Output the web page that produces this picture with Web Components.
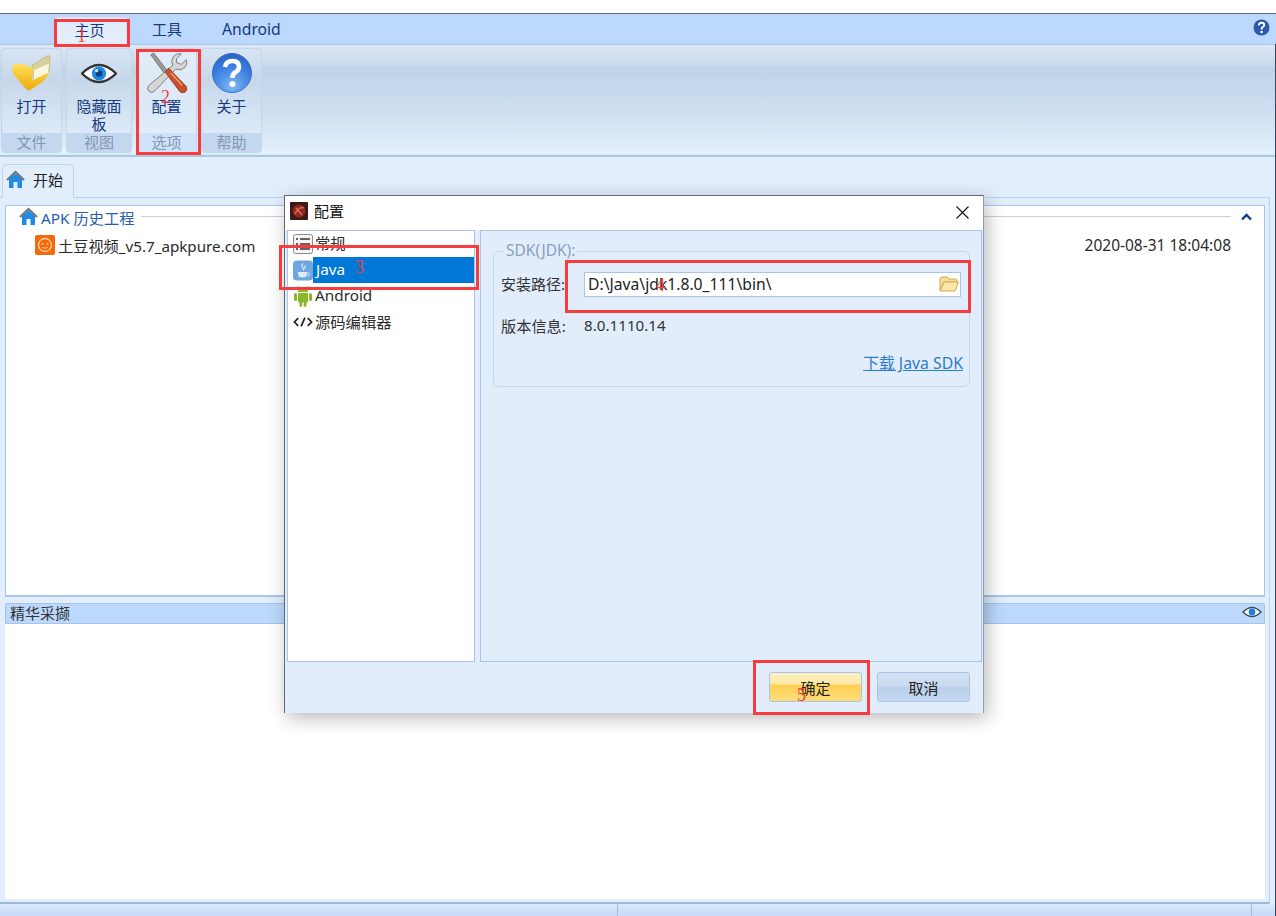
<!DOCTYPE html>
<html lang="zh">
<head>
<meta charset="utf-8">
<title>配置</title>
<style>
  html, body { margin: 0; padding: 0; background: #fff; }
  body { width: 1276px; height: 916px; overflow: hidden; position: relative; font: 15px "Noto Sans", "Noto Sans CJK SC", sans-serif; }
</style>
</head>
<body>
<app-shell>
  <main-ribbon></main-ribbon>
  <doc-area></doc-area>
  <status-bar></status-bar>
</app-shell>
<config-dialog></config-dialog>
<red-mark style="left:54px;top:19px;width:76px;height:28px" digit="1" dx="20" dy="5"></red-mark>
<red-mark style="left:136px;top:49px;width:65px;height:106px" digit="2" dx="22" dy="36"></red-mark>
<red-mark style="left:279px;top:245px;width:200px;height:45px" digit="3" dx="73" dy="10"></red-mark>
<red-mark style="left:565px;top:260px;width:406px;height:53px" digit="4" dx="88" dy="13"></red-mark>
<red-mark style="left:753px;top:660px;width:117px;height:55px" digit="5" dx="41" dy="23"></red-mark>

<script>
const ICONS = {
  folder: `<svg width="42" height="38" viewBox="0 0 44 40"><defs><linearGradient id="f" x1="0" y1="0" x2="0" y2="1"><stop offset="0" stop-color="#ffe25a"/><stop offset="1" stop-color="#eda808"/></linearGradient></defs>
    <path d="M22 12 L38 2 Q41 1 41 4 L40 18 L24 26Z" fill="#d8cf9c" stroke="#c4b878"/>
    <path d="M24 17 L40 10 L39 20 L24 28Z" fill="#fbf6dc"/>
    <path d="M1 14 Q1 11 4 11 L12 10 L16 13 L23 14 L22 28 L41 19 L34 29 L20 38 Q18 39 16 37 L3 22Q1 19 1 14Z" fill="url(#f)"/></svg>`,
  eye: `<svg width="36" height="23" viewBox="0 0 38 24"><path d="M1 12 Q19 -6 37 12 Q19 30 1 12Z" fill="#fff" stroke="#333" stroke-width="2.6"/><circle cx="19" cy="12" r="7.5" fill="#1e88e0"/><circle cx="19" cy="12" r="3.4" fill="#0b3f80"/><circle cx="16.5" cy="9" r="1.8" fill="#bfe4ff"/></svg>`,
  tools: `<svg width="42" height="42" viewBox="0 0 44 44">
    <path d="M5 3 L8 1 L22 19 L19 22Z" fill="#9a9a9a" stroke="#666" stroke-width=".8"/>
    <path d="M37 2 Q31 1 28 6 Q26 10 28 14 L3 35 Q0 39 3 41 Q6 44 9 41 L31 18 Q37 20 41 16 Q44 12 42 8 L37 13 L32 11 L32 7Z" fill="#d6d6d6" stroke="#7c7c7c" stroke-width="1"/>
    <path d="M20 21 L24 17 L42 36 Q44 40 41 42 Q37 44 35 41Z" fill="#c8502a" stroke="#8a3418" stroke-width=".8"/>
    <path d="M26 22 L38 35" stroke="#ee9a74" stroke-width="1.6" fill="none"/></svg>`,
  help: `<svg width="40" height="40" viewBox="0 0 40 40"><defs><radialGradient id="h" cx=".5" cy=".85" r=".9"><stop offset="0" stop-color="#7cb8f6"/><stop offset=".6" stop-color="#3a7ee0"/><stop offset="1" stop-color="#2a5cc0"/></radialGradient></defs><circle cx="20" cy="20" r="19.5" fill="url(#h)" stroke="#3c6cc0"/><path d="M13 14 Q14 8 20.500 8 Q27 8 27 14 Q27 17.500 23 19.500 Q20.500 21 20.500 25" fill="none" stroke="#fff" stroke-width="4.600"/><circle cx="20.500" cy="31" r="3" fill="#fff"/></svg>`,
  helpSmall: `<svg width="17" height="17" viewBox="0 0 17 17"><circle cx="8.500" cy="8.500" r="8" fill="#2b5aa8"/><path d="M5.800 6.500 Q6 3.800 8.600 3.800 Q11.200 3.800 11.200 6 Q11.200 7.500 9.700 8.200 Q8.600 8.800 8.600 10.500" fill="none" stroke="#fff" stroke-width="1.900"/><circle cx="8.600" cy="13" r="1.300" fill="#fff"/></svg>`,
  home: `<svg width="19" height="19" viewBox="0 0 19 19"><path d="M3 9 L3 18 L7.500 18 L7.500 12 L11.500 12 L11.500 18 L16 18 L16 9 L9.500 3.500Z" fill="#1f8be6"/><path d="M1 10 L9.500 2 L18 10" fill="none" stroke="#6d7a86" stroke-width="2.300"/></svg>`,
  app: `<svg width="20" height="20" viewBox="0 0 20 20"><rect width="20" height="20" rx="2" fill="#f46a0a"/><circle cx="10" cy="10" r="6.500" fill="none" stroke="#ffd0a8" stroke-width="1.300"/><circle cx="7.500" cy="9" r=".9" fill="#ffd0a8"/><circle cx="12.500" cy="9" r=".9" fill="#ffd0a8"/><path d="M7.500 12.500 Q10 14 12.500 12.500" fill="none" stroke="#ffd0a8"/></svg>`,
  list: `<svg width="20" height="20" viewBox="0 0 20 20"><rect x=".5" y=".5" width="19" height="19" rx="2" fill="#f4f4f4" stroke="#8a8a8a"/><path d="M3 5h2M3 10h2M3 15h2M7 5h10M7 10h10M7 15h10" stroke="#333" stroke-width="1.400"/></svg>`,
  java: `<svg width="21" height="21" viewBox="0 0 21 21"><rect width="21" height="21" rx="4" fill="#6ea6e0"/><path d="M5 12 L15 12 L14 17 Q10 18.500 6 17Z" fill="#dfeaf6"/><path d="M15 13 Q18 13 17 15 Q16 16 14.500 16" fill="none" stroke="#dfeaf6"/><path d="M10.500 3 Q8 6 10.500 7.500 Q12 9 10.500 10.500M13 5 Q11.500 7 13 9" fill="none" stroke="#dfeaf6" stroke-width="1.200"/></svg>`,
  android: `<svg width="20" height="21" viewBox="0 0 20 21"><path d="M5 6 A5 5 0 0 1 15 6Z" fill="#8ab82a"/><path d="M6 2 L4.500 0M14 2 L15.500 0" stroke="#8ab82a"/><rect x="5" y="7" width="10" height="9.500" rx="1" fill="#8ab82a"/><rect x="1" y="7" width="3" height="8" rx="1.500" fill="#8ab82a"/><rect x="16" y="7" width="3" height="8" rx="1.500" fill="#8ab82a"/><rect x="6.500" y="15" width="2.800" height="6" rx="1.400" fill="#8ab82a"/><rect x="10.700" y="15" width="2.800" height="6" rx="1.400" fill="#8ab82a"/></svg>`,
  code: `<svg width="21" height="12" viewBox="0 0 21 12"><path d="M5.500 2 L1.500 6 L5.500 10M15.500 2 L19.500 6 L15.500 10M12.500 1.500 L8.500 10.500" fill="none" stroke="#222" stroke-width="1.800"/></svg>`,
  smallFolder: `<svg width="20" height="16" viewBox="0 0 20 16"><path d="M1 14 L1 3 Q1 1 3 1 L8 1 L10 3 L17 3 Q18 3 18 5 L18 6 L5 6 Z" fill="#f6dc9e" stroke="#d8a850"/><path d="M1 15 L5 6 L19.500 6 L16 15Z" fill="#fbe6a8" stroke="#d8a850"/></svg>`,
  logo: `<svg width="18" height="18" viewBox="0 0 18 18"><rect width="18" height="18" rx="1" fill="#3a1a18"/><circle cx="9" cy="9" r="6.500" fill="#8e2a20"/><path d="M5 12 Q9 4 14 6 M6 6 L12 13" stroke="#e0705c" stroke-width="1.300" fill="none"/></svg>`,
  chevron: `<svg width="11" height="8" viewBox="0 0 11 8"><path d="M1 6.500 L5.500 2 L10 6.500" fill="none" stroke="#0a3a8c" stroke-width="2.300"/></svg>`,
  eyeSmall: `<svg width="20" height="12" viewBox="0 0 20 12"><path d="M1 6 Q10 -3 19 6 Q10 15 1 6Z" fill="#fff" stroke="#3a4a5a" stroke-width="1.400"/><circle cx="10" cy="6" r="3.400" fill="#1e80d8"/></svg>`,
  close: `<svg width="13" height="13" viewBox="0 0 13 13"><path d="M.5 .5 L12.500 12.500M12.500 .5 L.5 12.500" stroke="#111" stroke-width="1.100"/></svg>`
}

class AppIcon extends HTMLElement {
  connectedCallback () {
    this.attachShadow({ mode: 'open' })
    this.shadowRoot.innerHTML = `<style>:host{display:inline-flex;flex:none;align-items:center;justify-content:center;line-height:0}</style>${ICONS[this.getAttribute('name')]}`
  }
}
customElements.define('app-icon', AppIcon)

class AppShell extends HTMLElement {
  constructor () {
    super()
    this.attachShadow({ mode: 'open' })
    this.shadowRoot.innerHTML = `
      <style>
        :host { display: flex; flex-direction: column; box-sizing: border-box; width: 1276px; height: 916px; padding-top: 13px; }
        .menu { display: flex; align-items: flex-end; height: 30px; flex: none; border-top: 1px solid #5b6c84; background: #bcd8fc; position: relative; font-size: 15px; color: #15397c; }
        .tab { width: 72px; margin-left: 55px; height: 27px; box-sizing: border-box; border: 1px solid #d3e6fb; border-bottom: 0; border-radius: 3px 3px 0 0; background: linear-gradient(#dfeafa, #e6eefa); text-align: center; line-height: 25px; padding-right: 3px; }
        .tab2 { height: 27px; line-height: 25px; }
        .help { position: absolute; right: 6px; top: 5px; }
        .rest { flex: 1; display: flex; flex-direction: column; min-height: 0; border-right: 1px solid #33475f; }
      </style>
      <div class="menu">
        <div class="tab">主页</div>
        <div class="tab2" style="margin-left:25px">工具</div>
        <div class="tab2" style="margin-left:40px;font-size:15.700px">Android</div>
        <app-icon class="help" name="helpSmall"></app-icon>
      </div>
      <div class="rest"><slot></slot></div>`
  }
}
customElements.define('app-shell', AppShell)

class RibbonGroup extends HTMLElement {
  constructor () {
    super()
    this.attachShadow({ mode: 'open' })
    this.shadowRoot.innerHTML = `
      <style>
        :host { display: flex; flex-direction: column; flex: none; box-sizing: border-box; height: 105px; border: 1px solid #c4d6ea; border-radius: 4px; overflow: hidden; background: linear-gradient(#d9e5f4, #c6d7ea 30%, #d4e3f3 60%, #e0edfb); color: #15397c; font-size: 15px; text-align: center; }
        .big { flex: 1; display: flex; flex-direction: column; align-items: center; padding: 3px 0 0; min-height: 0; }
        .pic { height: 42px; display: flex; align-items: center; justify-content: center; flex: none; }
        .label { line-height: 18px; margin-top: 3px; width: 46px; }
        .cap { height: 19px; flex: none; line-height: 18px; background: #c3d7ee; color: #8298b2; font-size: 15px; }
        :host([on]) { background: linear-gradient(#e2ecf8, #dbe8f7 60%, #e6f0fc); }
        :host([on]) .cap { background: #cfe2f8; }
      </style>
      <div class="big">
        <div class="pic"><slot></slot></div>
        <div class="label">${this.getAttribute('label')}</div>
      </div>
      <div class="cap">${this.getAttribute('cap')}</div>`
  }
}
customElements.define('ribbon-group', RibbonGroup)

class MainRibbon extends HTMLElement {
  constructor () {
    super()
    this.attachShadow({ mode: 'open' })
    this.shadowRoot.innerHTML = `
      <style>
        :host { display: flex; flex: none; box-sizing: border-box; height: 113px; padding: 3px 0 0 1px; gap: 4px; border-top: 1px solid #a8c8ec; border-bottom: 2px solid #aec8e4; box-shadow: inset 0 -1px #cdf0f8; background: linear-gradient(#dde7f5, #cbdaec 17%, #bfd3e8 21%, #cddff0 60%, #e4f1fd); }
      </style>
      <ribbon-group label="打开" cap="文件" style="width:61px"><app-icon name="folder"></app-icon></ribbon-group>
      <ribbon-group label="隐藏面板" cap="视图" style="width:66px"><app-icon name="eye"></app-icon></ribbon-group>
      <ribbon-group label="配置" cap="选项" on style="width:61px"><app-icon name="tools"></app-icon></ribbon-group>
      <ribbon-group label="关于" cap="帮助" style="width:61px"><app-icon name="help"></app-icon></ribbon-group>`
  }
}
customElements.define('main-ribbon', MainRibbon)

class DocArea extends HTMLElement {
  constructor () {
    super()
    this.attachShadow({ mode: 'open' })
    this.shadowRoot.innerHTML = `
      <style>
        :host { display: flex; flex-direction: column; flex: 1; min-height: 0; box-sizing: border-box; background: #e2eefc; padding-top: 7px; }
        .tab { display: flex; align-items: center; gap: 8px; box-sizing: border-box; flex: none; width: 72px; height: 34px; margin: 0 0 -1px 2px; padding: 0 0 3px 3px; border: 1px solid #bcd4f2; border-bottom-color: #e2eefc; border-radius: 5px 5px 0 0; background: #e2eefc; color: #222; font-size: 15px; position: relative; }
        .page { flex: 1; min-height: 0; display: flex; flex-direction: column; margin-right: 5px; padding: 7px 4px 3px 5px; border: 1px solid #bcd4f2; border-left: 0; border-bottom: 2px solid #9db8da; }
        .recent { height: 392px; flex: none; box-sizing: border-box; background: #fff; border: 1px solid #a9c6ee; border-bottom-width: 2px; }
        .head { display: flex; align-items: center; height: 21px; padding: 0 12px 0 13px; color: #2a5cae; font-size: 15.300px; }
        .head span { margin-left: 3px; }
        .rule { flex: 1; height: 1px; background: #c0d2ea; margin: 0 10px 0 6px; }
        .row { display: flex; align-items: center; height: 20px; margin-top: 8px; padding: 0 33px 0 29px; color: #2a2a2a; }
        .row .name { margin-left: 3px; flex: 1; font-size: 15.200px; }
        .row .date { font-size: 15.500px; }
        .eh { display: flex; align-items: center; flex: none; height: 21px; box-sizing: border-box; margin-top: 6px; padding: 0 2px 3px 4px; background: #bcd9fc; border: 1px solid #a4c4ee; border-radius: 2px 2px 0 0; color: #333; font-size: 15px; justify-content: space-between; }
        .white { flex: 1; min-height: 0; background: #fff; }
      </style>
      <div class="tab"><app-icon name="home"></app-icon>开始</div>
      <div class="page">
        <section class="recent">
          <div class="head"><app-icon name="home"></app-icon><span>APK 历史工程</span><div class="rule"></div><app-icon name="chevron"></app-icon></div>
          <div class="row"><app-icon name="app"></app-icon><div class="name">土豆视频_v5.7_apkpure.com</div><div class="date">2020-08-31 18:04:08</div></div>
        </section>
        <div class="eh">精华采撷<app-icon name="eyeSmall"></app-icon></div>
        <div class="white"></div>
      </div>`
  }
}
customElements.define('doc-area', DocArea)

class StatusBar extends HTMLElement {
  constructor () {
    super()
    this.attachShadow({ mode: 'open' })
    this.shadowRoot.innerHTML = `
      <style>
        :host { display: flex; flex: none; height: 12px; box-sizing: border-box; background: linear-gradient(#dbe8fa, #c6dbf6); }
        i { display: block; width: 1px; background: #a9bcd4; }
      </style>
      <div style="width:617px"></div><i></i><div style="width:633px"></div><i></i>`
  }
}
customElements.define('status-bar', StatusBar)

class ConfigDialog extends HTMLElement {
  constructor () {
    super()
    this.attachShadow({ mode: 'open' })
    this.shadowRoot.innerHTML = `
      <style>
        :host { position: absolute; left: 284px; top: 195px; width: 700px; height: 518px; box-sizing: border-box; display: flex; flex-direction: column; background: #e1edfb; border: 1px solid #5e6a78; border-bottom: 0; border-right-color: #8e9cae; box-shadow: 3px 5px 18px rgba(0,0,0,.28); color: #333; font-size: 15px; }
        .title { display: flex; align-items: center; flex: none; height: 34px; box-sizing: border-box; background: #fff; padding: 0 14px 4px 5px; color: #111; gap: 6px; }
        .title .t { flex: 1; margin-bottom: 2px; }
        .title .x { margin-top: 2px; }
        .body { flex: 1; min-height: 0; display: flex; gap: 5px; padding: 0 1px 0 2px; }
        ul { list-style: none; margin: 0; padding: 0; width: 188px; height: 432px; box-sizing: border-box; background: #fff; border: 1px solid #a9c4e8; flex: none; }
        li { display: flex; align-items: center; height: 26px; padding-left: 5px; font-size: 15.300px; color: #2c2c2c; }
        li app-icon { width: 20px; }
        li span { padding: 0 0 2px 2px; }
        li:first-child span { padding-bottom: 4px; }
        li.sel span { flex: 1; box-sizing: border-box; height: 26px; line-height: 24px; background: #0078d7; color: #fff; padding: 0 0 0 3px; }
        .pane { flex: 1; height: 432px; box-sizing: border-box; border: 1px solid #a9c4e8; padding: 11px 11px 0 12px; }
        fieldset { margin: 0; padding: 12px 6px 0 7px; height: 145px; box-sizing: border-box; border: 1px solid #c6d8ee; border-radius: 6px; }
        legend { color: #8a9fbe; font-size: 15.500px; padding: 0 2px 2px; margin-left: 3px; line-height: 16px; }
        .line { display: flex; align-items: center; height: 25px; }
        .lab { width: 83px; flex: none; white-space: nowrap; padding-bottom: 2px; }
        .input { width: 377px; height: 25px; box-sizing: border-box; display: flex; align-items: center; justify-content: space-between; padding: 0 0 2px 3px; border: 1px solid #a9c4e8; background: #fff; color: #222; font-size: 15.700px; }
        .input app-icon { margin-right: 1px; }
        .v { margin-top: 16px; font-size: 15.200px; }
        .v div:last-child { padding-bottom: 2px; }
        a { display: block; margin-top: 13px; text-align: right; color: #2a7cc8; text-decoration: underline; font-size: 15.800px; }
        .foot { flex: none; height: 51px; display: flex; justify-content: flex-end; gap: 15px; padding: 10px 13px 0 0; box-sizing: border-box; }
        button { width: 93px; height: 30px; font: inherit; color: #222; border: 1px solid #a9c4e8; border-radius: 3px; padding: 0; background: linear-gradient(#d4e2f4, #c8d9ef 50%, #bacfe9 52%, #c6d9f2); }
        button.ok { background: linear-gradient(#fdf1c0, #fde8a8 40%, #fdd054 42%, #fedc78); }
      </style>
      <div class="title"><app-icon name="logo"></app-icon><div class="t">配置</div><app-icon class="x" name="close"></app-icon></div>
      <div class="body">
        <ul>
          <li><app-icon name="list"></app-icon><span>常规</span></li>
          <li class="sel"><app-icon name="java"></app-icon><span>Java</span></li>
          <li><app-icon name="android"></app-icon><span>Android</span></li>
          <li><app-icon name="code"></app-icon><span>源码编辑器</span></li>
        </ul>
        <div class="pane">
          <fieldset>
            <legend>SDK(JDK):</legend>
            <div class="line"><div class="lab">安装路径:</div><div class="input">D:\\Java\\jdk1.8.0_111\\bin\\<app-icon name="smallFolder"></app-icon></div></div>
            <div class="line v"><div class="lab">版本信息:</div><div>8.0.1110.14</div></div>
            <a>下载 Java SDK</a>
          </fieldset>
        </div>
      </div>
      <div class="foot"><button class="ok">确定</button><button>取消</button></div>`
  }
}
customElements.define('config-dialog', ConfigDialog)

// red annotations drawn over the screenshot
class RedMark extends HTMLElement {
  constructor () {
    super()
    this.attachShadow({ mode: 'open' })
    this.shadowRoot.innerHTML = `
      <style>
        :host { position: absolute; box-sizing: border-box; border: 3px solid #f63c3c; pointer-events: none; }
        span { position: absolute; left: ${this.getAttribute('dx')}px; top: ${this.getAttribute('dy')}px; color: #f63c3c; font: 18px/18px "Liberation Serif", serif; }
      </style>
      <span>${this.getAttribute('digit')}</span>`
  }
}
customElements.define('red-mark', RedMark)
</script>
</body>
</html>
